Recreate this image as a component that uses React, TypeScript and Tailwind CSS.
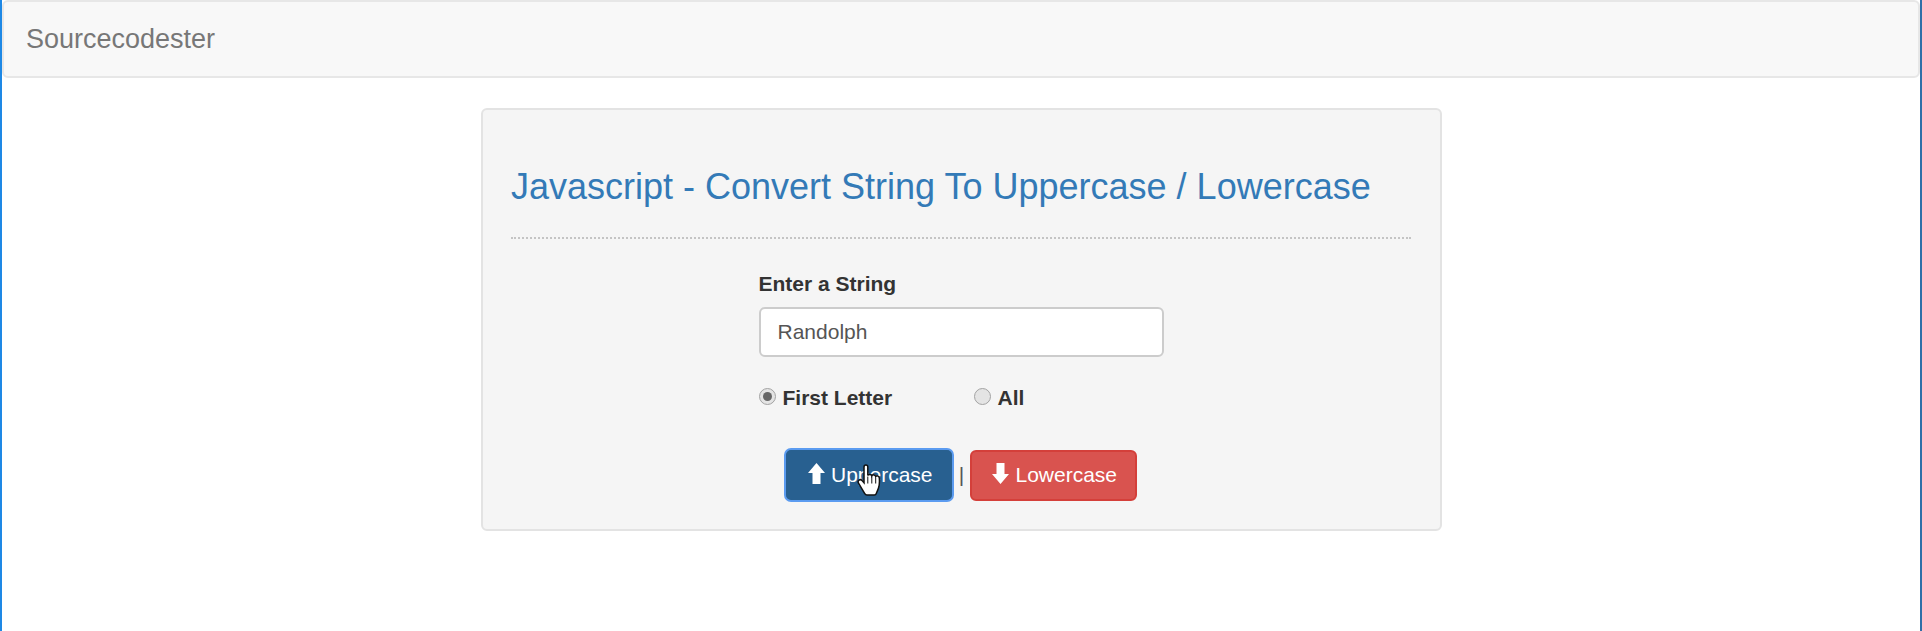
const ArrowUp = () => (
  <svg className="w-[17px] h-[21px] mb-[3px] fill-white" viewBox="0 0 17 21">
    <path d="M8.5 0 L17 10 H12.5 V21 H4.5 V10 H0 Z" />
  </svg>
);

const ArrowDown = () => (
  <svg className="w-[17px] h-[21px] mb-[3px] fill-white" viewBox="0 0 17 21">
    <path d="M8.5 21 L17 11 H12.5 V0 H4.5 V11 H0 Z" />
  </svg>
);

const Pointer = () => (
  <svg className="absolute left-[71px] top-[14px] w-[26px] h-[33px]" viewBox="0 0 26 32">
    <path
      d="M7 2.5c0-2.6 3.8-2.6 3.8 0v8.6c.6-1.7 3.6-1.6 4 .3.8-1.6 3.5-1.3 3.9.6 1-1.2 3.4-.8 3.6 1.3.3 3.4.2 7.2-.8 10.3-.7 2.2-1.6 3.6-2.2 5.4-.3 1-.8 1.5-2 1.5H10c-1.2 0-1.8-.6-2.4-1.6L1.5 18.6c-1.4-2.4 1.6-4.6 3.5-2.6l2 2.2z"
      fill="#ffffff"
      stroke="#111111"
      strokeWidth="1.5"
    />
    <path d="M10.8 12v7M14.8 12v7M18.7 13v6" stroke="#111111" strokeWidth="1" fill="none" />
  </svg>
);

const Radio = ({ checked }: { checked?: boolean }) => (
  <span className="flex items-center justify-center w-[17px] h-[17px] mb-[4px] rounded-full border border-[#a3a3a3] bg-[#e4e4e4]">
    {checked && <span className="w-[9px] h-[9px] rounded-full bg-[#666666]" />}
  </span>
);

export default function App() {
  return (
    <div className="min-h-[631px] bg-white border-l-2 border-r-2 border-l-[#1e88e5] border-r-[#2f6fa8] font-['Liberation_Sans',Arial,sans-serif] overflow-hidden">
      <nav className="h-[78px] flex items-center pl-[22px] bg-[#f8f8f8] border-2 border-[#e7e7e7] rounded-md">
        <span className="text-[27px] text-[#777777]">Sourcecodester</span>
      </nav>

      <div className="w-[961px] h-[423px] mt-[30px] ml-[479px] pl-[28px] pr-[29px] bg-[#f5f5f5] border-2 border-[#e3e3e3] rounded-md">
        <h3 className="pt-[57px] text-[36px] leading-[40px] text-[#337ab7]">
          Javascript - Convert String To Uppercase / Lowercase
        </h3>
        <div className="mt-[30px] border-t-2 border-dotted border-[#c4c4c4]" />

        <div className="w-[405px] mx-auto mt-[30px]">
          <label className="block text-[21px] leading-[30px] font-bold text-[#333333]">Enter a String</label>
          <div className="mt-[8px] h-[50px] flex items-center px-[17px] bg-white border-2 border-[#cccccc] rounded-md text-[21px] text-[#555555]">
            Randolph
          </div>

          <div className="mt-[26px] flex items-center h-[30px] text-[21px] font-bold text-[#333333]">
            <div className="flex items-center gap-[7px] w-[215px]">
              <Radio checked />
              <span>First Letter</span>
            </div>
            <div className="flex items-center gap-[7px]">
              <Radio />
              <span>All</span>
            </div>
          </div>

          <div className="mt-[36px] flex items-center justify-center text-[21px] text-white">
            <button className="relative w-[168px] h-[52px] pl-[3px] flex items-center justify-center gap-[6px] bg-[#286090] border border-[#204d74] rounded-md outline-2 outline-[#5b9bf0] -outline-offset-1">
              <ArrowUp />
              <span>Uppercase</span>
              <Pointer />
            </button>
            <span className="mx-[6px] text-[#555555]">|</span>
            <button className="w-[167px] h-[51px] pl-[2px] flex items-center justify-center gap-[6px] bg-[#d9534f] border-2 border-[#d43f3a] rounded-md">
              <ArrowDown />
              <span>Lowercase</span>
            </button>
          </div>
        </div>
      </div>
    </div>
  );
}
